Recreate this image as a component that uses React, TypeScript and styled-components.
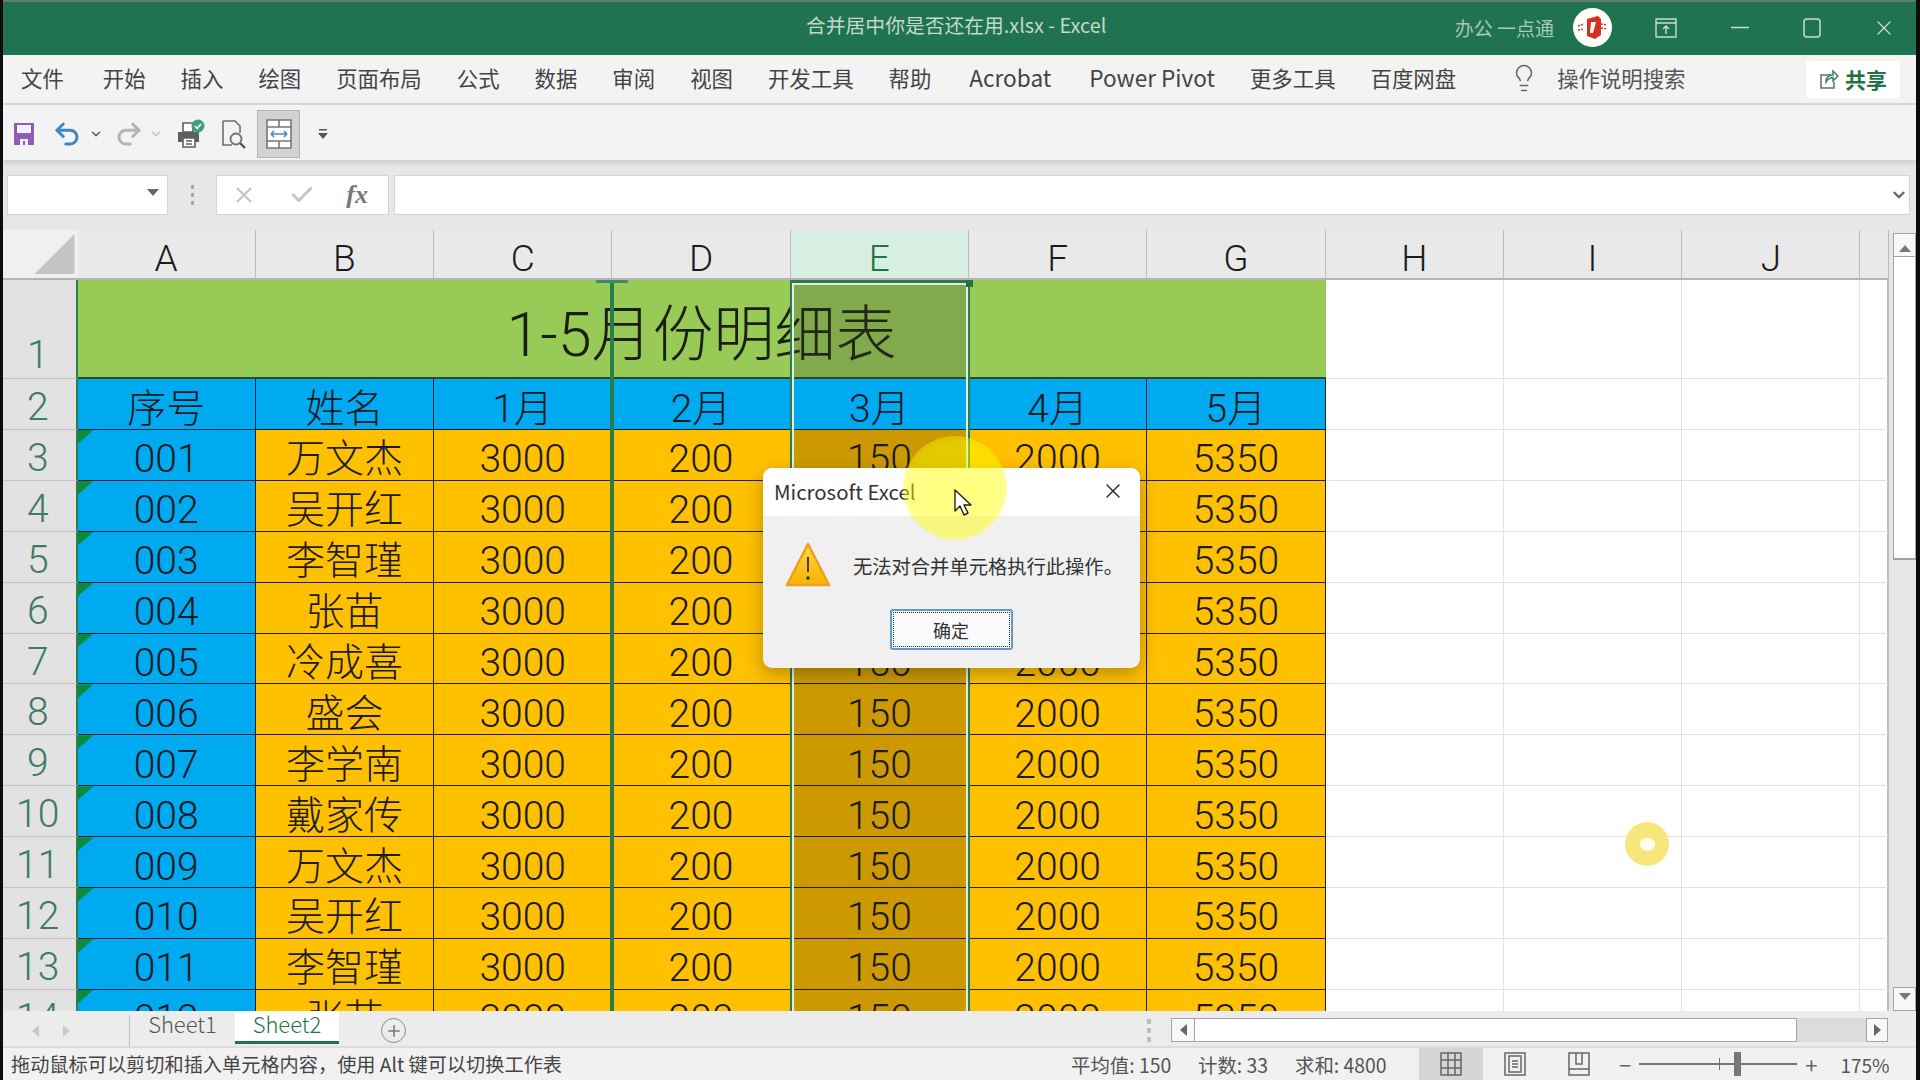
import * as React from "react";
import styled, { createGlobalStyle } from "styled-components";
import { Lightbulb, Undo2, Redo2, X, Check, Plus, ChevronDown } from "lucide-react";

const FONT = `"Noto Sans CJK SC", "Noto Sans", sans-serif`;
const SHEET_FONT = `Roboto, "Noto Sans CJK SC", sans-serif`;

const GlobalStyle = createGlobalStyle`
  html, body {
    margin: 0;
    padding: 0;
    background: #0a0a0a;
    font-family: ${FONT};
    overflow: hidden;
  }
  * { box-sizing: border-box; }
`;

const Screen = styled.div`
  position: relative;
  width: 1920px;
  height: 1080px;
  padding: 0 4px 0 3px;
  background: #0d0d0d;
  overflow: hidden;
`;

const Excel = styled.div`
  display: flex;
  flex-direction: column;
  width: 100%;
  height: 100%;
`;

const TitleBar = styled.div`
  position: relative;
  flex: 0 0 55px;
  display: flex;
  align-items: center;
  justify-content: flex-end;
  padding-bottom: 2px;
  background: #1f7350;
  border-top: 2px solid #5f7c6e;
`;

const DocName = styled.div`
  position: absolute;
  left: 803px;
  top: 1px;
  font-size: 19.8px;
  line-height: 44px;
  color: #c4d8ce;
`;

const Owner = styled.div`
  font-size: 19px;
  color: #a9c8b8;
  margin-right: 19px;
`;

const WindowButton = styled.div<{ $gap: number; $left?: number }>`
  display: flex;
  align-items: center;
  justify-content: center;
  width: 30px;
  height: 30px;
  margin-left: ${(p) => p.$left ?? 0}px;
  margin-right: ${(p) => p.$gap}px;
  color: #c9dcd2;
`;

const MenuBar = styled.div`
  flex: 0 0 50px;
  display: flex;
  align-items: center;
  padding: 0 16px 3px 18px;
  background: #f3f3f3;
  border-bottom: 2px solid #d8d8d8;
`;

const MenuItem = styled.div<{ $latin?: boolean }>`
  font-size: ${(p) => (p.$latin ? 22.6 : 21.4)}px;
  line-height: 30px;
  color: #444;
  margin-left: ${(p) => (p.$latin ? 3 : 0)}px;
  margin-right: 35px;
  white-space: nowrap;
  &:first-child {
    margin-right: 39px;
  }
`;

const SearchHint = styled.div`
  display: flex;
  align-items: center;
  gap: 18px;
  margin-left: 18px;
  font-size: 21.4px;
  color: #555;
`;

const ShareButton = styled.div`
  display: flex;
  align-items: center;
  justify-content: center;
  gap: 6px;
  width: 94px;
  height: 37px;
  margin-left: auto;
  margin-top: 3px;
  background: #fff;
  border-radius: 3px;
  font-size: 21px;
  font-weight: 700;
  color: #217346;
`;

const QuickBar = styled.div`
  flex: 0 0 55px;
  display: flex;
  align-items: center;
  padding: 3px 0 0 9px;
  background: #f3f3f3;
  box-shadow: 0 3px 5px rgba(0, 0, 0, 0.12);
  z-index: 1;
`;

const QuickIcon = styled.div<{ $w: number; $left?: number; $active?: boolean }>`
  display: flex;
  align-items: center;
  justify-content: center;
  flex: 0 0 ${(p) => p.$w}px;
  height: 48px;
  margin-left: ${(p) => p.$left ?? 0}px;
  background: ${(p) => (p.$active ? "#d2d2d2" : "transparent")};
  border: 1px solid ${(p) => (p.$active ? "#b2b2b2" : "transparent")};
`;

const FormulaRow = styled.div`
  flex: 0 0 70px;
  display: flex;
  align-items: flex-start;
  padding: 15px 6px 0 4px;
  background: #e7e7e7;
`;

const NameBox = styled.div`
  flex: 0 0 161px;
  height: 40px;
  display: flex;
  align-items: center;
  justify-content: flex-end;
  padding-right: 8px;
  background: #fff;
  border: 1px solid #d4d4d4;
`;

const Splitter = styled.div`
  flex: 0 0 48px;
  height: 40px;
  display: flex;
  flex-direction: column;
  align-items: center;
  justify-content: center;
  gap: 4px;
  & > i {
    width: 3px;
    height: 4px;
    background: #a8a8a8;
  }
`;

const FormulaButtons = styled.div`
  flex: 0 0 173px;
  height: 40px;
  display: flex;
  align-items: center;
  justify-content: space-between;
  padding: 0 20px 0 14px;
  background: #fff;
  border: 1px solid #d4d4d4;
  color: #c4c4c4;
`;

const FxLabel = styled.span`
  font-family: "Liberation Serif", serif;
  font-style: italic;
  font-weight: 700;
  font-size: 26px;
  color: #777;
`;

const FormulaInput = styled.div`
  flex: 1;
  height: 40px;
  margin-left: 5px;
  display: flex;
  align-items: center;
  justify-content: flex-end;
  padding-right: 1px;
  background: #fff;
  border: 1px solid #d4d4d4;
  color: #666;
`;

const SheetArea = styled.div`
  flex: 0 0 781px;
  display: flex;
  background: #e7e7e7;
`;

const Sheet = styled.div`
  position: relative;
  flex: 0 0 1886px;
  height: 781px;
  display: grid;
  grid-template-columns: 74.5px repeat(10, 178.3px) 28.5px;
  grid-template-rows: 50px 99px 51px repeat(11, 50.9px) 51px;
  overflow: hidden;
  background: #fff;
  font-family: ${SHEET_FONT};
`;

const CornerCell = styled.div`
  background: #f0f0f0;
  display: flex;
  align-items: flex-end;
  justify-content: flex-end;
  padding: 0 3px 4px 0;
  border-bottom: 2px solid #b4b4b4;
`;

const CornerMark = styled.div`
  width: 40px;
  height: 40px;
  background: #c4c4c4;
  clip-path: polygon(100% 0, 100% 100%, 0 100%);
`;

const ColHead = styled.div<{ $on?: boolean }>`
  display: flex;
  align-items: center;
  justify-content: center;
  padding-top: 10px;
  font-size: 37px;
  line-height: 40px;
  font-weight: 300;
  color: ${(p) => (p.$on ? "#217346" : "#1c1c1c")};
  background: ${(p) => (p.$on ? "#d6efe2" : "#e9e9e9")};
  border-right: 1.5px solid #bcbcbc;
  border-bottom: 2px solid #b4b4b4;
`;

const RowHead = styled.div<{ $tall?: boolean }>`
  display: flex;
  align-items: ${(p) => (p.$tall ? "flex-end" : "center")};
  justify-content: center;
  padding: ${(p) => (p.$tall ? "0 3px 0 0" : "6px 3px 0 0")};
  font-size: 39px;
  line-height: 46px;
  font-weight: 300;
  color: #3f7a62;
  background: #e2e2e2;
  border-bottom: 1.5px solid #c2c2c2;
  border-right: 2px solid #2f7d4f;
`;

const TitleCell = styled.div`
  grid-column: span 7;
  display: flex;
  align-items: center;
  justify-content: center;
  padding-top: 13px;
  font-size: 61px;
  font-weight: 300;
  line-height: 1;
  color: #1b1f10;
  background: #98ca58;
  border-bottom: 2px solid #2a4a22;
`;

const Cell = styled.div<{ $fill: string; $flag?: boolean }>`
  position: relative;
  display: flex;
  align-items: center;
  justify-content: center;
  padding-top: 9px;
  font-size: 39px;
  line-height: 42px;
  font-weight: 300;
  color: #1c1a22;
  background: ${(p) => p.$fill};
  border-right: 1.5px solid #1e1e38;
  border-bottom: 1.5px solid #1e1e38;
  &::before {
    content: "";
    display: ${(p) => (p.$flag ? "block" : "none")};
    position: absolute;
    left: 0;
    top: 0;
    width: 16px;
    height: 14px;
    background: #0a8c3c;
    clip-path: polygon(0 0, 100% 0, 0 100%);
  }
`;

const BlankCell = styled.div`
  border-right: 1.5px solid #e2e2e2;
  border-bottom: 1.5px solid #e2e2e2;
`;

const TailCell = styled(BlankCell)`
  border-right: 2px solid #bdbdbd;
`;

const SelectionShade = styled.div`
  position: absolute;
  inset: 0;
  grid-column: 6 / 7;
  grid-row: 2 / 3;
  background: rgba(60, 72, 40, 0.24);
`;

const SelectionFrame = styled.div`
  position: absolute;
  inset: 0 -1px 0 -1px;
  grid-column: 6 / 7;
  grid-row: 2 / 16;
  border-left: 2px solid #2d7a52;
  border-right: 2px solid #2d7a52;
  border-top: 3px solid #2d7a52;
  box-shadow: inset 2px 0 0 #dfeedd, inset -2px 0 0 #dfeedd, inset 0 2px 0 #dfeedd;
  &::after {
    content: "";
    position: absolute;
    right: -5px;
    top: -3px;
    width: 7px;
    height: 7px;
    background: #217346;
  }
`;

const DropLine = styled.div`
  position: absolute;
  top: 0;
  bottom: 0;
  right: -2px;
  grid-column: 4 / 5;
  grid-row: 2 / 16;
  width: 4px;
  background: #2a7d4a;
  &::before {
    content: "";
    position: absolute;
    left: -14px;
    top: 0;
    width: 32px;
    height: 3px;
    background: #3f8a62;
  }
`;

const VScroll = styled.div`
  flex: 1;
  display: flex;
  flex-direction: column;
  padding: 3px 0 0 4px;
  height: 781px;
`;

const ScrollButton = styled.div<{ $w?: number }>`
  flex: 0 0 ${(p) => p.$w ?? 24}px;
  display: flex;
  align-items: center;
  justify-content: center;
  background: #f8f8f8;
  border: 1.5px solid #a4a4a4;
`;

const VThumb = styled.div`
  flex: 0 0 303px;
  background: #fff;
  border: 1.5px solid #a4a4a4;
  border-top: none;
  border-bottom-width: 2px;
`;

const Arrow = styled.i<{ $dir: "up" | "down" | "left" | "right"; $color?: string }>`
  display: block;
  width: 0;
  height: 0;
  border: 6px solid transparent;
  ${(p) => `border-${{ up: "bottom", down: "top", left: "right", right: "left" }[p.$dir]}: 7px solid ${p.$color ?? "#777"};`}
  ${(p) => `border-${p.$dir}-width: 0;`}
`;

const VTrack = styled.div`
  flex: 1;
`;

const TabBar = styled.div`
  flex: 0 0 37px;
  display: flex;
  align-items: stretch;
  background: #ececec;
  border-bottom: 2px solid #dcdcdc;
`;

const TabArrows = styled.div`
  flex: 0 0 127px;
  display: flex;
  align-items: center;
  gap: 24px;
  padding-left: 29px;
  border-right: 1.5px solid #bdbdbd;
  margin: 4px 0 0;
`;

const Tab = styled.div<{ $on?: boolean }>`
  display: flex;
  align-items: flex-start;
  justify-content: center;
  width: ${(p) => (p.$on ? 104 : 105)}px;
  height: ${(p) => (p.$on ? 33 : 35)}px;
  font-size: 22px;
  line-height: 24px;
  font-weight: 300;
  color: ${(p) => (p.$on ? "#217346" : "#555")};
  background: ${(p) => (p.$on ? "#fff" : "transparent")};
  border-bottom: ${(p) => (p.$on ? "3px solid #217346" : "none")};
`;

const AddSheet = styled.div`
  align-self: center;
  display: flex;
  align-items: center;
  justify-content: center;
  width: 25px;
  height: 25px;
  margin: 4px 0 0 42px;
  border: 1.5px solid #8c8c8c;
  border-radius: 50%;
  color: #777;
`;

const HScroll = styled.div`
  margin: 7px 28px 0 auto;
  width: 717px;
  height: 24px;
  display: flex;
  background: #dcdcdc;
`;

const HThumb = styled.div`
  flex: 0 0 602px;
  background: #fff;
  border: 1.5px solid #a4a4a4;
  border-left: none;
`;

const HGap = styled.div`
  flex: 1;
`;

const HDots = styled.div`
  display: flex;
  flex-direction: column;
  gap: 4px;
  align-self: center;
  margin: 4px -720px 0 auto;
  & > i {
    width: 4px;
    height: 5px;
    background: #bcbcbc;
  }
`;

const StatusBar = styled.div`
  flex: 1;
  display: flex;
  align-items: center;
  padding-left: 8px;
  background: #f1f1f1;
  font-size: 19.2px;
  color: #444;
`;

const StatusNote = styled.div`
  flex: 0 0 1060px;
  white-space: nowrap;
`;

const StatusValue = styled.div<{ $w: number }>`
  flex: 0 0 ${(p) => p.$w}px;
  font-size: 19.4px;
  color: #555;
  white-space: nowrap;
`;

const ViewButton = styled.div<{ $on?: boolean }>`
  flex: 0 0 64px;
  height: 100%;
  display: flex;
  align-items: center;
  justify-content: center;
  background: ${(p) => (p.$on ? "#d6d6d6" : "transparent")};
`;

const ZoomSlider = styled.div`
  display: flex;
  align-items: center;
  margin-left: 8px;
  color: #666;
  font-size: 22px;
`;

const ZoomTrack = styled.div`
  position: relative;
  width: 158px;
  height: 2px;
  margin: 0 8px;
  background: #777;
  &::before {
    content: "";
    position: absolute;
    left: 80px;
    top: -5px;
    width: 1px;
    height: 12px;
    background: #777;
  }
  &::after {
    content: "";
    position: absolute;
    left: 95px;
    top: -11px;
    width: 7px;
    height: 24px;
    background: #777;
  }
`;

const ZoomLevel = styled.div`
  margin-left: 23px;
  font-size: 19px;
  color: #555;
`;

const Dialog = styled.div`
  position: absolute;
  left: 763px;
  top: 468px;
  width: 377px;
  height: 200px;
  display: flex;
  flex-direction: column;
  border-radius: 9px;
  overflow: hidden;
  background: #f0f0f0;
  box-shadow: 0 6px 18px rgba(0, 0, 0, 0.28);
`;

const DialogTitle = styled.div`
  flex: 0 0 48px;
  display: flex;
  align-items: center;
  justify-content: space-between;
  padding: 0 15px 3px 11px;
  background: #fff;
  font-size: 20.4px;
  color: #333;
`;

const DialogBody = styled.div`
  display: flex;
  align-items: center;
  gap: 22px;
  padding: 26px 0 0 22px;
`;

const DialogText = styled.div`
  margin-top: 2px;
  font-size: 19.3px;
  line-height: 28px;
  color: #333;
  white-space: nowrap;
`;

const DialogButton = styled.button`
  align-self: center;
  width: 123px;
  height: 41px;
  margin: 21px 0 0 -1px;
  padding: 0;
  font-family: ${FONT};
  font-size: 18px;
  color: #333;
  background: #fafafa;
  border: 2px solid #5b9bd0;
  border-radius: 3px;
  outline: 1.5px dotted #333;
  outline-offset: -4px;
`;

const CursorGlow = styled.div`
  position: absolute;
  left: 903px;
  top: 436px;
  width: 104px;
  height: 104px;
  border-radius: 50%;
  background: radial-gradient(circle, rgba(255, 255, 0, 0.5) 0, rgba(255, 255, 0, 0.48) 62%, rgba(255, 255, 0, 0) 100%);
`;

const PointerMark = styled.svg`
  position: absolute;
  left: 953px;
  top: 489px;
`;

const ClickMark = styled.div`
  position: absolute;
  left: 1625px;
  top: 822px;
  width: 44px;
  height: 44px;
  display: flex;
  align-items: center;
  justify-content: center;
  border-radius: 50%;
  background: #f7e77a;
  &::after {
    content: "";
    width: 15px;
    height: 13px;
    border-radius: 50% 50% 60% 60%;
    background: #fffdf2;
  }
`;

const menus = ["文件", "开始", "插入", "绘图", "页面布局", "公式", "数据", "审阅", "视图", "开发工具", "帮助", "Acrobat", "Power Pivot", "更多工具", "百度网盘"];
const columns = ["A", "B", "C", "D", "E", "F", "G", "H", "I", "J"];
const heads = ["序号", "姓名", "1月", "2月", "3月", "4月", "5月"];
const names = ["万文杰", "吴开红", "李智瑾", "张苗", "冷成喜", "盛会", "李学南", "戴家传", "万文杰", "吴开红", "李智瑾", "张苗"];
const amounts = ["3000", "200", "150", "2000", "5350"];

const BLUE = "#00aaf0";
const ORANGE = "#ffc000";
const ORANGE_DARK = "#cc9a00";

const Blanks = () => (
  <>
    <BlankCell />
    <BlankCell />
    <BlankCell />
    <TailCell />
  </>
);

const SaveIcon = () => (
  <svg width="22" height="26" viewBox="0 0 22 26">
    <path d="M1 2h20v22H1z" fill="#8d5fb4" />
    <path d="M4 4h14v8H4z" fill="#f3eef8" />
    <path d="M7 18h8v6H7z" fill="#f3eef8" />
    <path d="M10 20h2v4h-2z" fill="#8d5fb4" />
  </svg>
);

const PrintIcon = () => (
  <svg width="28" height="30" viewBox="0 0 28 30">
    <path d="M1 13h21v10H1z" fill="#5f5f5f" />
    <path d="M6 4h10v9H6z" fill="#fff" stroke="#5f5f5f" strokeWidth="1.6" />
    <path d="M6 19h12v9H6z" fill="#fff" stroke="#5f5f5f" strokeWidth="1.6" />
    <path d="M9 22h6M9 25h6" stroke="#5f5f5f" strokeWidth="1.4" />
    <circle cx="21" cy="7" r="6.5" fill="#3f9f7c" />
    <path d="M18 7l2.2 2.4L24 5" stroke="#fff" strokeWidth="1.6" fill="none" />
  </svg>
);

const PreviewIcon = () => (
  <svg width="26" height="30" viewBox="0 0 26 30">
    <path d="M2 2h12l5 5v7M2 2v24h9" fill="none" stroke="#707070" strokeWidth="1.6" />
    <circle cx="15" cy="20" r="5.5" fill="none" stroke="#707070" strokeWidth="1.8" />
    <path d="M19 24l5 5" stroke="#555" strokeWidth="2.4" />
  </svg>
);

const FitIcon = () => (
  <svg width="26" height="30" viewBox="0 0 26 30">
    <path d="M1 1h24v28H1z" fill="#fff" stroke="#777" strokeWidth="1.6" />
    <path d="M1 8h24M1 22h24M13 1v7M13 22v7" stroke="#777" strokeWidth="1.6" />
    <path d="M5 15h16M5 15l3-3M5 15l3 3M21 15l-3-3M21 15l-3 3" stroke="#3f8fc4" strokeWidth="1.6" fill="none" />
  </svg>
);

const ShareIcon = () => (
  <svg width="20" height="22" viewBox="0 0 20 22" fill="none" stroke="#6a6a6a" strokeWidth="1.5">
    <path d="M12 7H2v13h13v-6" />
    <path d="M7 14c0-5 3-7 7-7V3l5 5-5 5V9.500c-3 0-5 1.500-7 4.500z" fill="#fff" stroke="#3d7f62" />
  </svg>
);

const Logo = () => (
  <svg width="39" height="39" viewBox="0 0 39 39">
    <circle cx="19.500" cy="19.500" r="19.500" fill="#fff" />
    <path d="M14 11l11-3 3 3v16l-6 4-8-3z" fill="#d8301f" />
    <path d="M18 14h5l-3 11h-3z" fill="#fff" />
    <path d="M5 18l6-2M5 22l6-1M28 16l6 1M28 20l6 1" stroke="#c9402e" strokeWidth="1.6" strokeDasharray="2 1" />
  </svg>
);

const RibbonToggle = () => (
  <svg width="22" height="22" viewBox="0 0 22 22" fill="none" stroke="#c9dcd2" strokeWidth="1.4">
    <path d="M1 2h20v18H1zM1 6h20" />
    <path d="M11 17v-7M8 12l3-3 3 3" />
  </svg>
);

const WarnIcon = () => (
  <svg width="46" height="46" viewBox="0 0 46 46">
    <defs>
      <linearGradient id="warnFill" x1="0" y1="0" x2="0" y2="1">
        <stop offset="0" stopColor="#ffd54a" />
        <stop offset="1" stopColor="#f9b400" />
      </linearGradient>
    </defs>
    <path d="M23 2L44 43H2z" fill="url(#warnFill)" stroke="#eb9f1c" strokeWidth="2.500" strokeLinejoin="round" />
    <path d="M23 15v15" stroke="#333" strokeWidth="1.800" />
    <circle cx="23" cy="36" r="1.800" fill="#333" />
  </svg>
);

const GridIcon = () => (
  <svg width="22" height="24" viewBox="0 0 22 24" fill="none" stroke="#666" strokeWidth="1.500">
    <path d="M1 1h20v22H1zM1 8h20M1 16h20M8 1v22M15 1v22" />
  </svg>
);

const PageIcon = () => (
  <svg width="22" height="24" viewBox="0 0 22 24" fill="none" stroke="#666" strokeWidth="1.500">
    <path d="M1 1h20v22H1zM5 4h12v16H5z" />
    <path d="M8 9h6M8 12h6M8 15h6" />
  </svg>
);

const BreakIcon = () => (
  <svg width="22" height="24" viewBox="0 0 22 24" fill="none" stroke="#666" strokeWidth="1.500">
    <path d="M1 1h20v22H1zM1 17h20M8 1v11h6V1" />
  </svg>
);

const App: React.FC = () => {
  const renderRows = names.map((name, i) => (
    <React.Fragment key={i}>
      <RowHead>{i + 3}</RowHead>
      <Cell $fill={BLUE} $flag>
        {String(i + 1).padStart(3, "0")}
      </Cell>
      <Cell $fill={ORANGE}>{name}</Cell>
      {amounts.map((a, j) => (
        <Cell key={j} $fill={j === 2 ? ORANGE_DARK : ORANGE}>
          {a}
        </Cell>
      ))}
      <Blanks />
    </React.Fragment>
  ));

  return (
    <Screen>
      <GlobalStyle />
      <Excel>
        <TitleBar>
          <DocName>合并居中你是否还在用.xlsx - Excel</DocName>
          <Owner>办公 一点通</Owner>
          <Logo />
          <WindowButton $gap={44} $left={39}>
            <RibbonToggle />
          </WindowButton>
          <WindowButton $gap={42}>
            <svg width="18" height="3"><path d="M0 1.500h18" stroke="#c9dcd2" strokeWidth="1.500" /></svg>
          </WindowButton>
          <WindowButton $gap={42}>
            <svg width="18" height="20" viewBox="0 0 18 20" fill="none" stroke="#c9dcd2" strokeWidth="1.500"><rect x="1" y="1" width="16" height="18" rx="3" /></svg>
          </WindowButton>
          <WindowButton $gap={17}>
            <X size={24} strokeWidth={1.300} />
          </WindowButton>
        </TitleBar>

        <MenuBar>
          {menus.map((m) => (
            <MenuItem key={m} $latin={/^[A-Z]/.test(m)}>{m}</MenuItem>
          ))}
          <SearchHint>
            <Lightbulb size={30} strokeWidth={1.200} color="#666" />
            操作说明搜索
          </SearchHint>
          <ShareButton>
            <ShareIcon />
            共享
          </ShareButton>
        </MenuBar>

        <QuickBar>
          <QuickIcon $w={22}><SaveIcon /></QuickIcon>
          <QuickIcon $w={42} $left={10}><Undo2 size={30} color="#3f86c4" strokeWidth={2.400} /></QuickIcon>
          <QuickIcon $w={12}><ChevronDown size={14} color="#555" strokeWidth={2.400} /></QuickIcon>
          <QuickIcon $w={38} $left={6}><Redo2 size={30} color="#b4b4b4" strokeWidth={2.400} /></QuickIcon>
          <QuickIcon $w={14}><ChevronDown size={14} color="#bbb" strokeWidth={2} /></QuickIcon>
          <QuickIcon $w={32} $left={11}><PrintIcon /></QuickIcon>
          <QuickIcon $w={32} $left={11}><PreviewIcon /></QuickIcon>
          <QuickIcon $w={43} $left={7} $active><FitIcon /></QuickIcon>
          <QuickIcon $w={20} $left={13}>
            <svg width="10" height="12" viewBox="0 0 10 12"><path d="M1 1h8v1.500H1zM0 5h10L5 11z" fill="#555" /></svg>
          </QuickIcon>
        </QuickBar>

        <FormulaRow>
          <NameBox><Arrow $dir="down" $color="#666" /></NameBox>
          <Splitter><i /><i /><i /></Splitter>
          <FormulaButtons>
            <X size={26} strokeWidth={2} />
            <Check size={26} strokeWidth={2.600} />
            <FxLabel>fx</FxLabel>
          </FormulaButtons>
          <FormulaInput><ChevronDown size={18} strokeWidth={3.200} /></FormulaInput>
        </FormulaRow>

        <SheetArea>
          <Sheet>
            <CornerCell><CornerMark /></CornerCell>
            {columns.map((c) => (
              <ColHead key={c} $on={c === "E"}>{c}</ColHead>
            ))}
            <ColHead />

            <RowHead $tall>1</RowHead>
            <TitleCell>1-5月份明细表</TitleCell>
            <Blanks />

            <RowHead>2</RowHead>
            {heads.map((h) => (
              <Cell key={h} $fill={BLUE}>{h}</Cell>
            ))}
            <Blanks />

            {renderRows}

            <SelectionShade />
            <SelectionFrame />
            <DropLine />
          </Sheet>
          <VScroll>
            <ScrollButton><Arrow $dir="up" /></ScrollButton>
            <VThumb />
            <VTrack />
            <ScrollButton><Arrow $dir="down" /></ScrollButton>
          </VScroll>
        </SheetArea>

        <TabBar>
          <TabArrows>
            <Arrow $dir="left" $color="#c8c8c8" />
            <Arrow $dir="right" $color="#c8c8c8" />
          </TabArrows>
          <Tab>Sheet1</Tab>
          <Tab $on>Sheet2</Tab>
          <AddSheet><Plus size={18} strokeWidth={2} /></AddSheet>
          <HDots><i /><i /><i /></HDots>
          <HScroll>
            <ScrollButton $w={24}><Arrow $dir="left" $color="#666" /></ScrollButton>
            <HThumb />
            <HGap />
            <ScrollButton $w={22}><Arrow $dir="right" $color="#666" /></ScrollButton>
          </HScroll>
        </TabBar>

        <StatusBar>
          <StatusNote>拖动鼠标可以剪切和插入单元格内容，使用 Alt 键可以切换工作表</StatusNote>
          <StatusValue $w={127}>平均值: 150</StatusValue>
          <StatusValue $w={97}>计数: 33</StatusValue>
          <StatusValue $w={124}>求和: 4800</StatusValue>
          <ViewButton $on><GridIcon /></ViewButton>
          <ViewButton><PageIcon /></ViewButton>
          <ViewButton><BreakIcon /></ViewButton>
          <ZoomSlider>
            −
            <ZoomTrack />
            +
          </ZoomSlider>
          <ZoomLevel>175%</ZoomLevel>
        </StatusBar>
      </Excel>

      <Dialog>
        <DialogTitle>
          Microsoft Excel
          <X size={24} strokeWidth={1.500} color="#333" />
        </DialogTitle>
        <DialogBody>
          <WarnIcon />
          <DialogText>无法对合并单元格执行此操作。</DialogText>
        </DialogBody>
        <DialogButton>确定</DialogButton>
      </Dialog>

      <CursorGlow />
      <PointerMark width="20" height="28" viewBox="0 0 20 28">
        <path d="M2 1v21l5-5 4 9 4-2-4-8h7z" fill="#fff" stroke="#222" strokeWidth="1.400" strokeLinejoin="round" />
      </PointerMark>
      <ClickMark />
    </Screen>
  );
};

export default App;
